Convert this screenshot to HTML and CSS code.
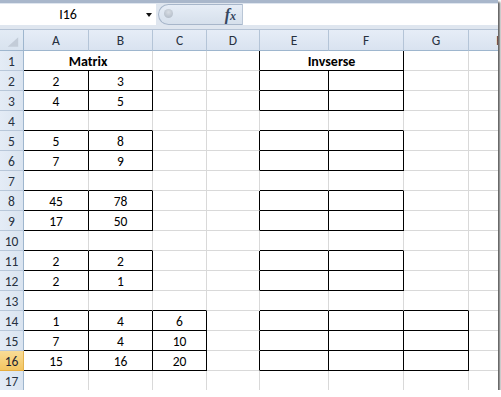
FILE: index.html
```html
<!DOCTYPE html>
<html>
<head>
<meta charset="utf-8">
<link rel="stylesheet" href="styles.css">
</head>
<body>
<div class="window">
  <div class="fbar">
    <div class="namebox"><span class="name">I16</span><span class="arrow"></span></div>
    <div class="pill"><span class="knob"></span><span class="fx">f<span class="fxx">x</span></span></div>
    <div class="input"></div>
  </div>
  <div class="sheet">
    <div class="corner"><svg width="24" height="21" viewBox="0 0 24 21"><polygon points="19,7 19,17 8,17" fill="#c3ccd8"/></svg></div>
    <div class="ch">A</div><div class="ch">B</div><div class="ch">C</div><div class="ch">D</div><div class="ch">E</div><div class="ch">F</div><div class="ch">G</div><div class="ch">H</div>

    <div class="rh">1</div><div class="c b m2 bold">Matrix</div><div class="c"></div><div class="c r"></div><div class="c r b m2 bold">Invserse</div><div class="c"></div><div class="c"></div>

    <div class="rh">2</div><div class="c r b">2</div><div class="c r b">3</div><div class="c"></div><div class="c r"></div><div class="c r b"></div><div class="c r b"></div><div class="c"></div><div class="c"></div>
    <div class="rh">3</div><div class="c r b">4</div><div class="c r b">5</div><div class="c"></div><div class="c r"></div><div class="c r b"></div><div class="c r b"></div><div class="c"></div><div class="c"></div>
    <div class="rh">4</div><div class="c b"></div><div class="c b"></div><div class="c"></div><div class="c"></div><div class="c b"></div><div class="c b"></div><div class="c"></div><div class="c"></div>

    <div class="rh">5</div><div class="c r b">5</div><div class="c r b">8</div><div class="c"></div><div class="c r"></div><div class="c r b"></div><div class="c r b"></div><div class="c"></div><div class="c"></div>
    <div class="rh">6</div><div class="c r b">7</div><div class="c r b">9</div><div class="c"></div><div class="c r"></div><div class="c r b"></div><div class="c r b"></div><div class="c"></div><div class="c"></div>
    <div class="rh">7</div><div class="c b"></div><div class="c b"></div><div class="c"></div><div class="c"></div><div class="c b"></div><div class="c b"></div><div class="c"></div><div class="c"></div>

    <div class="rh">8</div><div class="c r b">45</div><div class="c r b">78</div><div class="c"></div><div class="c r"></div><div class="c r b"></div><div class="c r b"></div><div class="c"></div><div class="c"></div>
    <div class="rh">9</div><div class="c r b">17</div><div class="c r b">50</div><div class="c"></div><div class="c r"></div><div class="c r b"></div><div class="c r b"></div><div class="c"></div><div class="c"></div>
    <div class="rh">10</div><div class="c b"></div><div class="c b"></div><div class="c"></div><div class="c"></div><div class="c b"></div><div class="c b"></div><div class="c"></div><div class="c"></div>

    <div class="rh">11</div><div class="c r b">2</div><div class="c r b">2</div><div class="c"></div><div class="c r"></div><div class="c r b"></div><div class="c r b"></div><div class="c"></div><div class="c"></div>
    <div class="rh">12</div><div class="c r b">2</div><div class="c r b">1</div><div class="c"></div><div class="c r"></div><div class="c r b"></div><div class="c r b"></div><div class="c"></div><div class="c"></div>
    <div class="rh">13</div><div class="c b"></div><div class="c b"></div><div class="c b"></div><div class="c"></div><div class="c b"></div><div class="c b"></div><div class="c b"></div><div class="c"></div>

    <div class="rh">14</div><div class="c r b">1</div><div class="c r b">4</div><div class="c r b">6</div><div class="c r"></div><div class="c r b"></div><div class="c r b"></div><div class="c r b"></div><div class="c"></div>
    <div class="rh">15</div><div class="c r b">7</div><div class="c r b">4</div><div class="c r b">10</div><div class="c r"></div><div class="c r b"></div><div class="c r b"></div><div class="c r b"></div><div class="c"></div>
    <div class="rh sel">16</div><div class="c r b">15</div><div class="c r b">16</div><div class="c r b">20</div><div class="c r"></div><div class="c r b"></div><div class="c r b"></div><div class="c r b"></div><div class="c"></div>
    <div class="rh">17</div><div class="c"></div><div class="c"></div><div class="c"></div><div class="c"></div><div class="c"></div><div class="c"></div><div class="c"></div><div class="c"></div>
  </div>
</div>
</body>
</html>
```
FILE: styles.css
```css
html, body {
  margin: 0;
  padding: 0;
  background: #ffffff;
}
body {
  font-family: Carlito, Lato, "Liberation Sans", sans-serif;
  font-size: 13.5px;
  color: #000;
}
.window {
  width: 498px;
  height: 390px;
  overflow: hidden;
  background: #fff;
  box-shadow: 2px 2px 2px rgba(40, 40, 40, 0.75);
}

/* formula bar */
.fbar {
  height: 25px;
  border-top: 3px solid #a9b7cb;
  border-bottom: 1px solid #b5c3d5;
  background: #dfe6ef;
  display: flex;
  align-items: flex-start;
  padding-top: 1px;
  box-sizing: content-box;
}
.namebox {
  width: 156px;
  height: 21px;
  background: #fff;
  display: flex;
  align-items: center;
}
.name {
  flex: 1;
  text-align: center;
  line-height: 21px;
  margin-right: 10px;
  font-size: 14px;
}
.arrow {
  width: 0;
  height: 0;
  border-left: 3px solid transparent;
  border-right: 3px solid transparent;
  border-top: 4px solid #111;
  margin-right: 4px;
  margin-top: 1px;
}
.pill {
  margin-left: 2px;
  width: 84px;
  height: 21px;
  box-sizing: border-box;
  border: 1px solid #a7b6ca;
  border-right: none;
  border-radius: 11px 0 0 11px;
  background: linear-gradient(#e6edf6, #d6e0ec);
  display: flex;
  align-items: center;
  justify-content: space-between;
  padding: 0 6px 0 5px;
}
.knob {
  width: 9px;
  height: 9px;
  border-radius: 50%;
  background: radial-gradient(circle at 50% 35%, #d8dde4 0, #b8c1cc 70%);
  margin-top: -3px;
}
.fx {
  font-family: "Liberation Serif", "DejaVu Serif", serif;
  font-style: italic;
  font-weight: bold;
  font-size: 16px;
  color: #34465f;
  line-height: 1;
}
.fxx {
  font-size: 12px;
}
.input {
  flex: 1;
  height: 21px;
  background: #fff;
  border-left: 1px solid #b9c6d6;
}

/* sheet grid */
.sheet {
  display: grid;
  grid-template-columns: 24px 65px 64px 54px 53px 69px 75px 65px 64px;
  grid-template-rows: 21px repeat(17, 20px);
}
.sheet > div {
  box-sizing: border-box;
  display: flex;
  align-items: center;
  justify-content: center;
  overflow: hidden;
  white-space: nowrap;
}
.corner {
  background: linear-gradient(#e3ebf5, #d9e3ef);
  border-right: 1px solid #9eb6ce;
  border-bottom: 1px solid #9eb6ce;
}
.corner svg { display: block; }
.ch {
  background: linear-gradient(#e6edf7, #d9e3f0);
  border-right: 1px solid #b4c4d7;
  border-bottom: 1px solid #9eb6ce;
  color: #27313f;
  padding-top: 1px;
}
.rh {
  background: linear-gradient(90deg, #e4ecf6, #dae4f0);
  border-right: 1px solid #9eb6ce;
  border-bottom: 1px solid #b8c7d9;
  color: #27313f;
  padding-top: 1px;
}
.rh.sel {
  background: linear-gradient(#f9dc96, #f3c561);
  border-bottom-color: #e6ad3f;
  border-right-color: #e3b24f;
  color: #1d2430;
}
.c {
  border-right: 1px solid #d9d9d9;
  border-bottom: 1px solid #d9d9d9;
  padding-top: 1px;
}
.c.r { border-right-color: #000; }
.c.b { border-bottom-color: #000; }
.m2 { grid-column: span 2; }
.bold { font-weight: bold; font-size: 14px; }
```
